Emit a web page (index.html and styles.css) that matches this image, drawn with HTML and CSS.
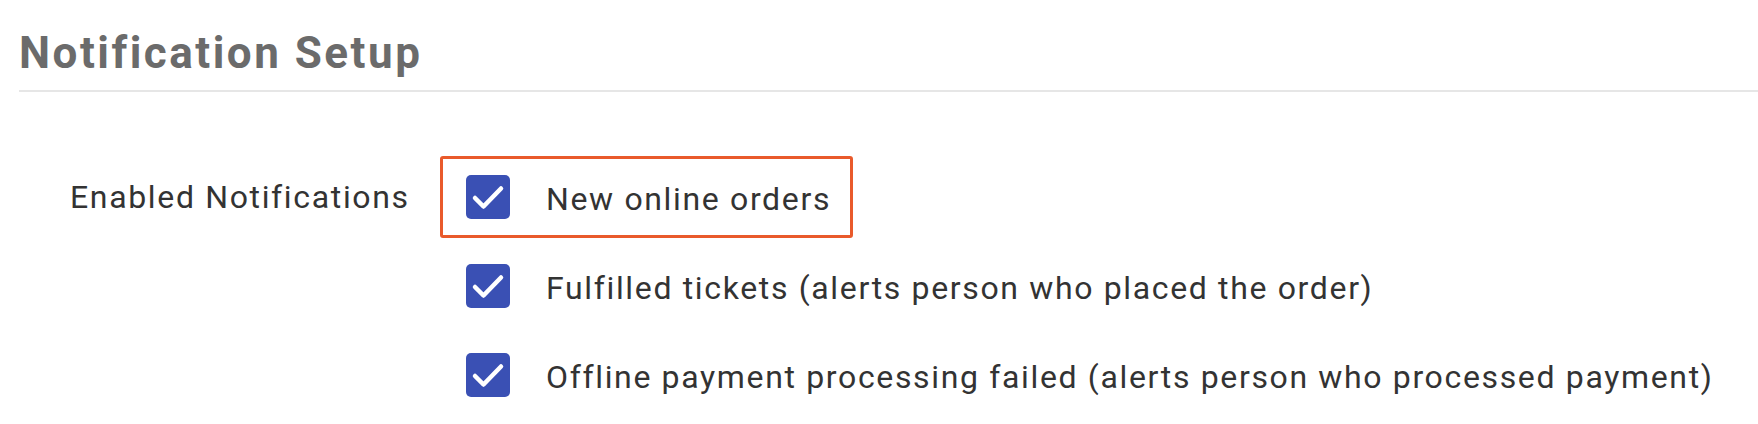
FILE: index.html
```html
<!DOCTYPE html>
<html lang="en">
<head>
<meta charset="utf-8">
<title>Notification Setup</title>
<link rel="stylesheet" href="styles.css">
</head>
<body>
<section class="panel">
  <h1 class="panel-title">Notification Setup</h1>
  <div class="field">
    <div class="field-label">Enabled Notifications</div>
    <div class="options">
      <label class="option option-highlight">
        <span class="checkbox"><svg viewBox="0 0 44 44" width="44" height="44"><polyline points="9,23 17.5,31.5 35,13.5" fill="none" stroke="#fff" stroke-width="4.5" stroke-linecap="round" stroke-linejoin="round"/></svg></span>
        <span class="option-text">New online orders</span>
      </label>
      <label class="option">
        <span class="checkbox"><svg viewBox="0 0 44 44" width="44" height="44"><polyline points="9,23 17.5,31.5 35,13.5" fill="none" stroke="#fff" stroke-width="4.5" stroke-linecap="round" stroke-linejoin="round"/></svg></span>
        <span class="option-text">Fulfilled tickets (alerts person who placed the order)</span>
      </label>
      <label class="option">
        <span class="checkbox"><svg viewBox="0 0 44 44" width="44" height="44"><polyline points="9,23 17.5,31.5 35,13.5" fill="none" stroke="#fff" stroke-width="4.5" stroke-linecap="round" stroke-linejoin="round"/></svg></span>
        <span class="option-text">Offline payment processing failed (alerts person who processed payment)</span>
      </label>
    </div>
  </div>
</section>
</body>
</html>
```

FILE: styles.css
```css
html, body {
  margin: 0;
  padding: 0;
  background: #ffffff;
}

body {
  font-family: Roboto, "Liberation Sans", Arial, sans-serif;
  color: #333333;
}

.panel {
  padding: 27px 0 0 19px;
}

.panel-title {
  margin: 0;
  padding: 0 0 11px 0;
  font-size: 44px;
  line-height: 52px;
  font-weight: 700;
  letter-spacing: 2.5px;
  color: #6b6b6b;
  border-bottom: 2px solid #e6e6e6;
}

.field {
  display: flex;
  align-items: flex-start;
  margin-top: 64px;
  padding-left: 51px;
}

.field-label {
  width: 370px;
  flex: none;
  font-size: 32px;
  line-height: 44px;
  letter-spacing: 1.65px;
  padding-top: 19px;
  color: #333333;
}

.options {
  display: flex;
  flex-direction: column;
  align-items: flex-start;
  gap: 7px;
}

.option {
  display: inline-flex;
  align-items: center;
  gap: 36px;
  padding: 13px 19px 14px 23px;
  border: 3px solid transparent;
  border-radius: 3px;
}

.option-highlight {
  border-color: #e95a2b;
}

.checkbox {
  width: 44px;
  height: 44px;
  flex: none;
  background: #3a50b4;
  border-radius: 5px;
  display: block;
}

.checkbox svg {
  display: block;
}

.option-text {
  font-size: 32px;
  line-height: 44px;
  letter-spacing: 1.65px;
  padding-top: 5px;
  color: #333333;
}
```
